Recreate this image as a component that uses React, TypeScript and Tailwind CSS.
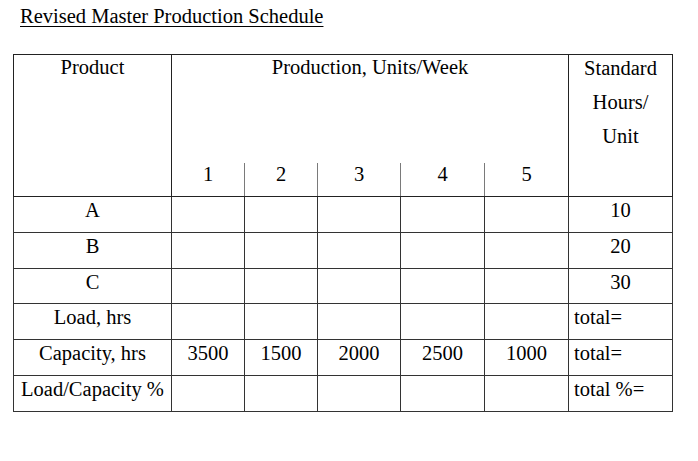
import React from "react";

const rows: { label: string; cells: string[]; last: string; lastAlign: "center" | "left" }[] = [
  { label: "A", cells: ["", "", "", "", ""], last: "10", lastAlign: "center" },
  { label: "B", cells: ["", "", "", "", ""], last: "20", lastAlign: "center" },
  { label: "C", cells: ["", "", "", "", ""], last: "30", lastAlign: "center" },
  { label: "Load, hrs", cells: ["", "", "", "", ""], last: "total=", lastAlign: "left" },
  { label: "Capacity, hrs", cells: ["3500", "1500", "2000", "2500", "1000"], last: "total=", lastAlign: "left" },
  { label: "Load/Capacity %", cells: ["", "", "", "", ""], last: "total %=", lastAlign: "left" },
];

const heights = ["h-[36px]", "h-[36px]", "h-[35px]", "h-[36px]", "h-[36px]", "h-[36px]"];

export default function App() {
  return (
    <div className="w-[698px] h-[461px] bg-white text-black font-['Liberation_Serif','Times_New_Roman',serif] text-[20.5px] leading-[23px]">
      <div className="pt-[5px] pl-[20px]">
        <span className="underline underline-offset-[3px] decoration-1">Revised Master Production Schedule</span>
      </div>
      <table className="mt-[26px] ml-[13px] w-[659px] table-fixed border-collapse">
        <colgroup>
          <col className="w-[158px]" />
          <col className="w-[73px]" />
          <col className="w-[73px]" />
          <col className="w-[83px]" />
          <col className="w-[84px]" />
          <col className="w-[84px]" />
          <col className="w-[104px]" />
        </colgroup>
        <tbody>
          <tr className="h-[108px]">
            <td rowSpan={2} className="border border-[#222] align-top text-center p-0 pt-[1px]">
              Product
            </td>
            <td colSpan={5} className="border-t border-[#222] align-top text-center p-0 pt-[1px]">
              Production, Units/Week
            </td>
            <td rowSpan={2} className="border border-[#222] align-top text-center p-0">
              <div className="-mt-[4px] leading-[34px]">
                <div>Standard</div>
                <div>Hours/</div>
                <div>Unit</div>
              </div>
            </td>
          </tr>
          <tr className="h-[34px]">
            {["1", "2", "3", "4", "5"].map((n, i) => (
              <td
                key={n}
                className={`border-b border-[#222] align-top text-center p-0 ${i > 0 ? "border-l border-l-[#7a7a7a]" : ""}`}
              >
                {n}
              </td>
            ))}
          </tr>
          {rows.map((r, ri) => (
            <tr key={r.label} className={heights[ri]}>
              <td className="border border-[#333] align-top text-center p-0 pt-[2px]">{r.label}</td>
              {r.cells.map((c, ci) => (
                <td key={ci} className="border border-[#333] align-top text-center p-0 pt-[2px]">
                  {c}
                </td>
              ))}
              <td
                className={`border border-[#333] align-top p-0 pt-[2px] ${r.lastAlign === "center" ? "text-center" : "text-left pl-[5px]"}`}
              >
                {r.last}
              </td>
            </tr>
          ))}
        </tbody>
      </table>
    </div>
  );
}
